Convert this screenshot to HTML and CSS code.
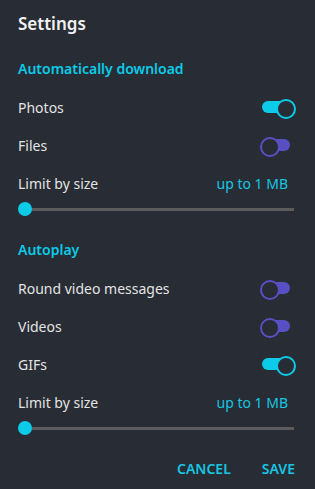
FILE: index.html
```html
<!DOCTYPE html>
<html lang="en">
<head>
    <meta charset="UTF-8">
    <meta name="viewport" content="width=device-width, initial-scale=1.0">
    <title>Settings</title>
    <link rel="stylesheet" href="styles.css">
</head>
<body>
    <div class="dialog">
        <h1 class="title">Settings</h1>

        <div class="section">
            <h2 class="section-title">Automatically download</h2>
            <div class="row">
                <span class="label">Photos</span>
                <span class="toggle on"></span>
            </div>
            <div class="row">
                <span class="label">Files</span>
                <span class="toggle"></span>
            </div>
            <div class="row">
                <span class="label">Limit by size</span>
                <span class="value">up to 1 MB</span>
            </div>
            <div class="slider">
                <span class="thumb"></span>
                <span class="track"></span>
            </div>
        </div>

        <div class="section">
            <h2 class="section-title">Autoplay</h2>
            <div class="row">
                <span class="label">Round video messages</span>
                <span class="toggle"></span>
            </div>
            <div class="row">
                <span class="label">Videos</span>
                <span class="toggle"></span>
            </div>
            <div class="row">
                <span class="label">GIFs</span>
                <span class="toggle on"></span>
            </div>
            <div class="row">
                <span class="label">Limit by size</span>
                <span class="value">up to 1 MB</span>
            </div>
            <div class="slider">
                <span class="thumb"></span>
                <span class="track"></span>
            </div>
        </div>

        <div class="buttons">
            <button class="btn">CANCEL</button>
            <button class="btn">SAVE</button>
        </div>
    </div>
</body>
</html>
```

FILE: styles.css
```css
*{
    margin: 0px;
    padding: 0px;
    box-sizing: border-box;
}
body{
    background: #282c34;
    font-family: "Noto Sans", "Open Sans", sans-serif;
    color: #e3e3e3;
}
.dialog{
    width: 315px;
    height: 489px;
    padding: 14px 21px 0px 18px;
}
.title{
    font-size: 17px;
    font-weight: 600;
    line-height: 20px;
    color: #f2f2f2;
}
.section{
    margin-top: 25px;
}
.section + .section{
    margin-top: 24px;
}
.section-title{
    font-size: 14px;
    font-weight: 600;
    line-height: 20px;
    color: #0bcbe8;
    margin-bottom: 9px;
}
.row{
    display: flex;
    height: 38px;
    align-items: center;
    justify-content: space-between;
    font-size: 14px;
}
.value{
    color: #16c6e2;
    margin-right: 6px;
}
.toggle{
    position: relative;
    width: 28px;
    height: 12px;
    margin-right: 4px;
    border-radius: 6px;
    background: #5850c2;
}
.toggle::after{
    content: "";
    position: absolute;
    top: -2px;
    left: -2px;
    width: 16px;
    height: 16px;
    border-radius: 50%;
    border: 2px solid #5850c2;
    background: #282c34;
}
.toggle.on{
    background: #0bcbe8;
}
.toggle.on::after{
    left: 14px;
    border-color: #0bcbe8;
}
.slider{
    display: flex;
    align-items: center;
    height: 14px;
}
.thumb{
    width: 14px;
    height: 14px;
    border-radius: 50%;
    background: #0bcbe8;
    position: relative;
    z-index: 1;
}
.track{
    flex: 1;
    height: 3px;
    margin-left: -7px;
    background: #5c5c5c;
}
.buttons{
    display: flex;
    justify-content: flex-end;
    gap: 32px;
    margin-top: 24px;
}
.btn{
    background: none;
    border: none;
    font-family: "Noto Sans", "Open Sans", sans-serif;
    font-size: 14px;
    font-weight: 600;
    line-height: 20px;
    color: #16c6e2;
    margin-right: -1px;
}
```
